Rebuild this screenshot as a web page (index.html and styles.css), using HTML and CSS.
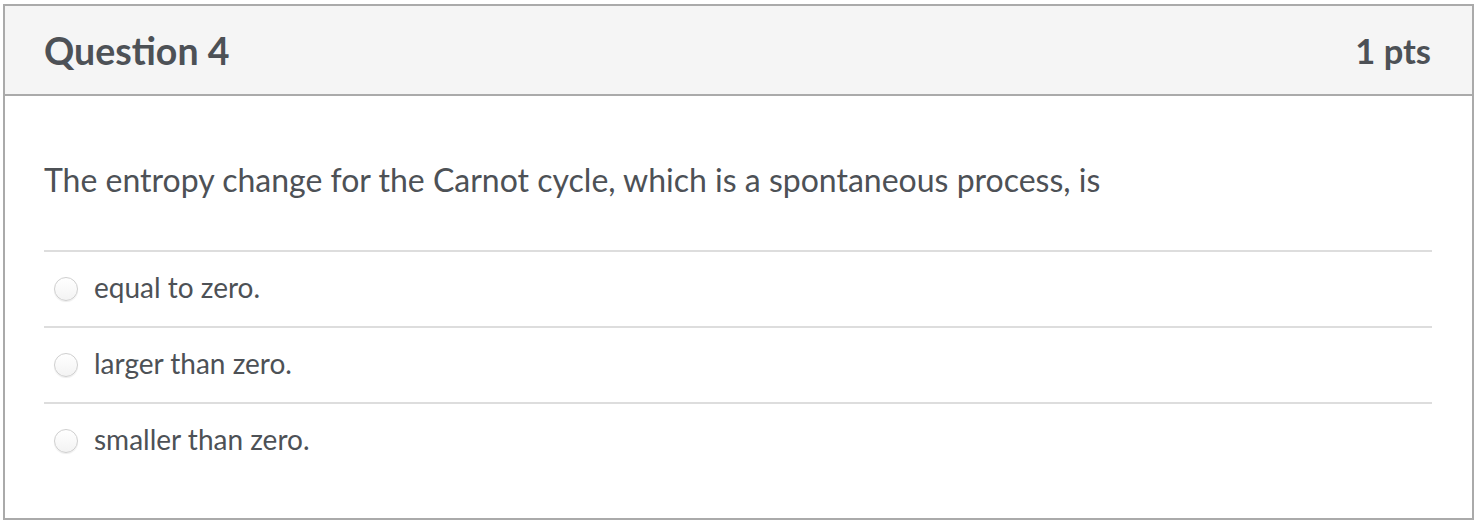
FILE: index.html
```html
<!DOCTYPE html>
<html>
<head>
<meta charset="utf-8">
<link rel="stylesheet" href="styles.css">
</head>
<body>
<div class="question">
  <div class="header">
    <h2 class="title">Question 4</h2>
    <span class="pts">1 pts</span>
  </div>
  <div class="content">
    <p class="text">The entropy change for the Carnot cycle, which is a spontaneous process, is</p>
    <div class="answers">
      <label class="answer"><span class="radio"></span><span class="label">equal to zero.</span></label>
      <label class="answer"><span class="radio"></span><span class="label">larger than zero.</span></label>
      <label class="answer"><span class="radio"></span><span class="label">smaller than zero.</span></label>
    </div>
  </div>
</div>
</body>
</html>
```

FILE: styles.css
```css
html, body {
  margin: 0;
  padding: 0;
  background: #fff;
}
body {
  padding: 4px 8px 0 3px;
  font-family: Lato, "Liberation Sans", sans-serif;
  color: #4d5156;
}
.question {
  border: 2px solid #aaaaaa;
  height: 516px;
  box-sizing: border-box;
  width: 1471px;
}
.header {
  background: #f5f5f5;
  border-bottom: 2px solid #aaaaaa;
  height: 90px;
  box-sizing: border-box;
  display: flex;
  align-items: center;
  justify-content: space-between;
  padding: 0 41px 0 39px;
}
.title {
  margin: 0;
  font-size: 37.5px;
  font-weight: 700;
  color: #4d5156;
}
.pts {
  font-size: 34.5px;
  font-weight: 700;
  color: #4d5156;
}
.content {
  padding: 0 40px 0 39px;
}
.text {
  margin: 0;
  padding-top: 64px;
  font-size: 32px;
  line-height: 40px;
  height: 90px;
}
.answers {
  display: flex;
  flex-direction: column;
}
.answer {
  display: flex;
  align-items: center;
  border-top: 2px solid #dddddd;
  height: 76px;
  box-sizing: border-box;
  font-size: 28px;
}
.label {
  margin-bottom: 5px;
}
.radio {
  width: 22px;
  height: 22px;
  border-radius: 50%;
  border: 1px solid #cfcfcf;
  background: linear-gradient(#ffffff, #f3f3f3);
  box-shadow: 0 1px 1px rgba(0, 0, 0, 0.08);
  margin-left: 10px;
  margin-right: 16px;
  flex: none;
}
```
